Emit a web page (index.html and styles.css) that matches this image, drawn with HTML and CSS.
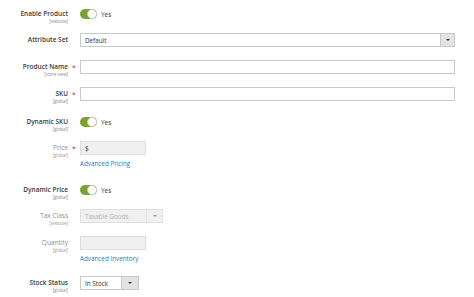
FILE: index.html
```html
<!DOCTYPE html>
<html>
<head>
<meta charset="utf-8">
<link rel="stylesheet" href="styles.css">
</head>
<body>
<div class="form">
  <div class="row r1">
    <div class="lab"><div class="name">Enable Product</div><div class="scope">[website]</div></div>
    <div class="star"></div>
    <div class="ctl"><span class="toggle"><span class="knob"></span></span><span class="yes">Yes</span></div>
  </div>
  <div class="row r2">
    <div class="lab"><div class="name">Attribute Set</div></div>
    <div class="star"></div>
    <div class="ctl"><div class="select full"><span class="val">Default</span><span class="arrow"><i></i></span></div></div>
  </div>
  <div class="row r3">
    <div class="lab"><div class="name">Product Name</div><div class="scope">[store view]</div></div>
    <div class="star">*</div>
    <div class="ctl"><div class="input full"></div></div>
  </div>
  <div class="row r4">
    <div class="lab"><div class="name">SKU</div><div class="scope">[global]</div></div>
    <div class="star">*</div>
    <div class="ctl"><div class="input full"></div></div>
  </div>
  <div class="row r5">
    <div class="lab"><div class="name">Dynamic SKU</div><div class="scope">[global]</div></div>
    <div class="star"></div>
    <div class="ctl"><span class="toggle"><span class="knob"></span></span><span class="yes">Yes</span></div>
  </div>
  <div class="row r6 dis">
    <div class="lab"><div class="name">Price</div><div class="scope">[global]</div></div>
    <div class="star">*</div>
    <div class="ctl"><div class="input small grey"><span class="val">$</span></div></div>
  </div>
  <div class="linkrow l1"><a class="link">Advanced Pricing</a></div>
  <div class="row r7">
    <div class="lab"><div class="name">Dynamic Price</div><div class="scope">[global]</div></div>
    <div class="star"></div>
    <div class="ctl"><span class="toggle"><span class="knob"></span></span><span class="yes">Yes</span></div>
  </div>
  <div class="row r8 dis">
    <div class="lab"><div class="name">Tax Class</div><div class="scope">[website]</div></div>
    <div class="star"></div>
    <div class="ctl"><div class="select tax"><span class="val">Taxable Goods</span><span class="arrow"><i></i></span></div></div>
  </div>
  <div class="row r9 dis">
    <div class="lab"><div class="name">Quantity</div><div class="scope">[global]</div></div>
    <div class="star"></div>
    <div class="ctl"><div class="input small grey"></div></div>
  </div>
  <div class="linkrow l2"><a class="link">Advanced Inventory</a></div>
  <div class="row r10">
    <div class="lab"><div class="name">Stock Status</div><div class="scope">[global]</div></div>
    <div class="star"></div>
    <div class="ctl"><div class="select stock"><span class="val">In Stock</span><span class="arrow"><i></i></span></div></div>
  </div>
</div>
</body>
</html>
```

FILE: styles.css
```css
html, body {
  margin: 0;
  padding: 0;
  background: #ffffff;
}
body {
  font-family: "Open Sans", "Liberation Sans", sans-serif;
  color: #333333;
  width: 474px;
  height: 297px;
  overflow: hidden;
}
.form {
  display: flex;
  flex-direction: column;
}
.row {
  display: grid;
  grid-template-columns: 68px 12px 375px;
  height: 14px;
}
.r1 { margin-top: 7px; }
.r2 { margin-top: 12px; }
.r3 { margin-top: 13px; }
.r4 { margin-top: 13px; }
.r5 { margin-top: 14px; }
.r6 { margin-top: 12px; }
.r7 { margin-top: 0; }
.r8 { margin-top: 12px; }
.r9 { margin-top: 13px; }
.r10 { margin-top: 0; }

.lab {
  text-align: right;
  padding-top: 3px;
}
.name {
  font-size: 6.5px;
  font-weight: 600;
  line-height: 8px;
  color: #3a3a3a;
  white-space: nowrap;
}
.scope {
  font-size: 4.4px;
  line-height: 6px;
  color: #8a8a8a;
  white-space: nowrap;
}
.dis .name { color: #8f8f8f; font-weight: 400; }
.dis .scope { color: #9a9a9a; }
.star {
  color: #e22626;
  font-size: 7px;
  line-height: 14px;
  text-align: center;
  padding-top: 1px;
}
.ctl {
  display: flex;
  align-items: center;
  height: 14px;
}
.toggle {
  width: 17px;
  height: 10px;
  border-radius: 5px;
  background: #79a22e;
  position: relative;
  display: inline-block;
}
.knob {
  position: absolute;
  right: 0;
  top: 0;
  width: 10px;
  height: 10px;
  border-radius: 50%;
  background: #ffffff;
  box-sizing: border-box;
  border: 1px solid #c8c8c8;
}
.yes {
  font-size: 6.4px;
  color: #333333;
  margin-left: 4px;
}
.input, .select {
  box-sizing: border-box;
  height: 14px;
  border: 1px solid #c9c9c9;
  background: #ffffff;
  display: flex;
  align-items: center;
}
.full { width: 375px; }
.small { width: 66px; }
.grey { background: #f0f0f0; border-color: #dedede; }
.val {
  font-size: 6.3px;
  padding-left: 4px;
  color: #333333;
  flex: 1;
  white-space: nowrap;
}
.arrow {
  width: 14px;
  height: 12px;
  box-sizing: border-box;
  border-left: 1px solid #c9c9c9;
  background: #e3e3e3;
  display: flex;
  align-items: center;
  justify-content: center;
}
.arrow i {
  width: 0;
  height: 0;
  border-left: 2px solid transparent;
  border-right: 2px solid transparent;
  border-top: 2.5px solid #303030;
}
.tax {
  width: 83px;
  background: #f0f0f0;
  border-color: #e0e0e0;
}
.tax .val { color: #b0b0b0; }
.tax .arrow { width: 16px; background: #f0f0f0; border-left-color: #e0e0e0; }
.tax .arrow i { border-top-color: #9a9a9a; }
.stock { width: 59px; }
.stock .arrow { width: 17px; }
.linkrow {
  padding-left: 80px;
  height: 12px;
  margin-top: 3px;
  margin-bottom: 13px;
}
.l2 { margin-bottom: 11px; }
.link {
  font-size: 6.3px;
  line-height: 12px;
  color: #1979c3;
  display: block;
}
```
